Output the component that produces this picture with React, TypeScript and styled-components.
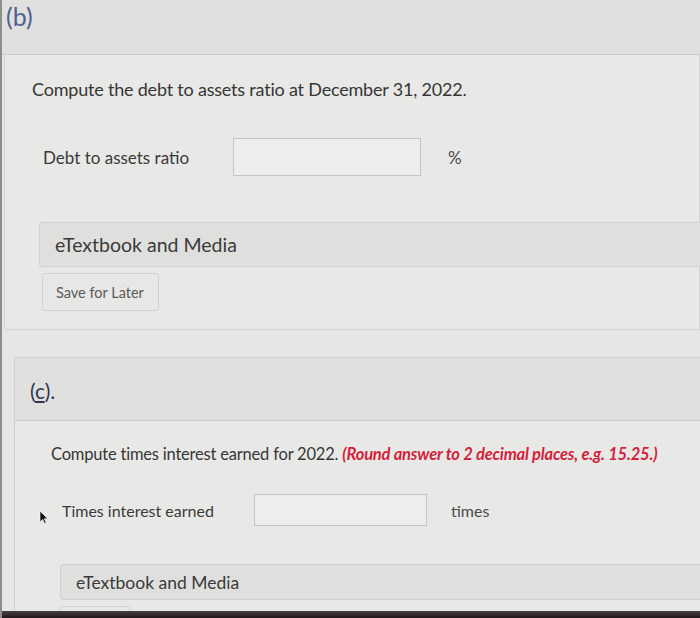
import styled, { createGlobalStyle } from 'styled-components';

const GlobalStyle = createGlobalStyle`
  html, body {
    margin: 0;
    padding: 0;
    background: #e6e7e4;
  }
  body {
    font-family: Lato, 'Open Sans', sans-serif;
    color: #383838;
  }
`;

interface AnswerProps {
  label: string;
  unit: string;
  indent: number;
  top: number;
  labelWidth: number;
  inputWidth: number;
  inputHeight: number;
  unitGap: number;
  fontSize: number;
}

function App() {
  return (
    <>
      <GlobalStyle />
      <Page>
        <PartHeader>
          <PartLetter>(b)</PartLetter>
        </PartHeader>
        <CardB>
          <Question $indent={27} $top={22} $size={18}>
            Compute the debt to assets ratio at December 31, 2022.
          </Question>
          <Answer
            label="Debt to assets ratio"
            unit="%"
            indent={38}
            top={37}
            labelWidth={190}
            inputWidth={188}
            inputHeight={38}
            unitGap={27}
            fontSize={17}
          />
          <MediaBar $indent={34} $top={46} $height={45} $size={19.5}>
            eTextbook and Media
          </MediaBar>
          <SaveButton>Save for Later</SaveButton>
        </CardB>

        <CardC>
          <SubHeader>
            <SubLetter>
              (<u>c</u>).
            </SubLetter>
          </SubHeader>
          <Question $indent={36} $top={21} $size={16.5}>
            Compute times interest earned for 2022.{' '}
            <Hint>(Round answer to 2 decimal places, e.g. 15.25.)</Hint>
          </Question>
          <CursorWrap>
            <Answer
              label="Times interest earned"
              unit="times"
              indent={47}
              top={28}
              labelWidth={192}
              inputWidth={173}
              inputHeight={32}
              unitGap={24}
              fontSize={16}
            />
            <Cursor viewBox="0 0 10 14" width="10" height="14">
              <path d="M1 1 L1 12 L3.6 9.4 L5.6 13.4 L7.2 12.6 L5.2 8.8 L8.6 8.8 Z" fill="#111" stroke="#fff" strokeWidth="0.6" />
            </Cursor>
          </CursorWrap>
          <MediaBar $indent={45} $top={38} $height={36} $size={17.5}>
            eTextbook and Media
          </MediaBar>
          <GhostButton />
        </CardC>
        <BottomEdge />
      </Page>
    </>
  );
}

function Answer({ label, unit, indent, top, labelWidth, inputWidth, inputHeight, unitGap, fontSize }: AnswerProps) {
  return (
    <AnswerRow $indent={indent} $top={top} $size={fontSize}>
      <Label $width={labelWidth}>{label}</Label>
      <Input type="text" $width={inputWidth} $height={inputHeight} />
      <Unit $gap={unitGap}>{unit}</Unit>
    </AnswerRow>
  );
}

const Page = styled.div`
  position: relative;
  height: 618px;
  overflow: hidden;
  border-left: 2px solid #8d8d8b;
  box-sizing: border-box;
  display: flex;
  flex-direction: column;
`;

const PartHeader = styled.div`
  height: 55px;
  flex-shrink: 0;
  background: #e0e1de;
  border-bottom: 1px solid #c9c9c7;
  padding: 1px 0 0 4px;
  box-sizing: border-box;
`;

const PartLetter = styled.span`
  font-size: 25px;
  color: #50608f;
`;

const CardB = styled.div`
  flex-shrink: 0;
  margin-left: 2px;
  height: 275px;
  box-sizing: border-box;
  border: 1px solid #d3d3d1;
  border-top: none;
  border-radius: 0 0 0 4px;
  background: #e8e9e6;
  display: flex;
  flex-direction: column;
`;

const Question = styled.div<{ $indent: number; $top: number; $size: number }>`
  flex-shrink: 0;
  padding: ${(p) => p.$top}px 0 0 ${(p) => p.$indent}px;
  font-size: ${(p) => p.$size}px;
  letter-spacing: -0.2px;
  line-height: 24px;
  color: #363636;
  white-space: nowrap;
`;

const Hint = styled.span`
  color: #d31f3c;
  font-weight: 700;
  font-style: italic;
`;

const AnswerRow = styled.div<{ $indent: number; $top: number; $size: number }>`
  display: flex;
  align-items: center;
  margin-top: ${(p) => p.$top}px;
  padding-left: ${(p) => p.$indent}px;
  font-size: ${(p) => p.$size}px;
  color: #3a3a3a;
`;

const Label = styled.span<{ $width: number }>`
  width: ${(p) => p.$width}px;
  flex-shrink: 0;
`;

const Input = styled.input<{ $width: number; $height: number }>`
  width: ${(p) => p.$width}px;
  height: ${(p) => p.$height}px;
  box-sizing: border-box;
  border: 1px solid #c4c4c2;
  background: #edeeeb;
  outline: none;
  margin: 0;
`;

const Unit = styled.span<{ $gap: number }>`
  margin-left: ${(p) => p.$gap}px;
  color: #4a4a4a;
`;

const MediaBar = styled.div<{ $indent: number; $top: number; $height: number; $size: number }>`
  flex-shrink: 0;
  margin: ${(p) => p.$top}px -4px 0 ${(p) => p.$indent}px;
  height: ${(p) => p.$height}px;
  box-sizing: border-box;
  border: 1px solid #d0d0ce;
  border-radius: 3px;
  background: #dfe0dd;
  display: flex;
  align-items: center;
  padding-left: 15px;
  font-size: ${(p) => p.$size}px;
  color: #3a3a3a;
`;

const SaveButton = styled.button`
  align-self: flex-start;
  flex-shrink: 0;
  margin: 6px 0 0 37px;
  width: 117px;
  height: 38px;
  box-sizing: border-box;
  border: 1px solid #d2d2d0;
  border-radius: 3px;
  background: #e7e8e5;
  font-family: Lato, sans-serif;
  font-size: 14.5px;
  color: #5a5a5a;
  text-align: left;
  padding: 0 0 0 13px;
`;

const CardC = styled.div`
  flex-shrink: 0;
  margin: 27px 0 0 12px;
  border: 1px solid #d0d0ce;
  border-right: none;
  background: #e8e9e6;
  display: flex;
  flex-direction: column;
  height: 280px;
  box-sizing: border-box;
`;

const SubHeader = styled.div`
  height: 63px;
  flex-shrink: 0;
  box-sizing: border-box;
  background: #e0e1de;
  border-bottom: 1px solid #cdcdcb;
  display: flex;
  align-items: center;
  padding: 2px 0 0 15px;
`;

const SubLetter = styled.span`
  font-size: 21px;
  color: #2f3552;
`;

const CursorWrap = styled.div`
  position: relative;
  flex-shrink: 0;
`;

const Cursor = styled.svg`
  position: absolute;
  left: 24px;
  top: 44px;
`;

const GhostButton = styled.div`
  flex-shrink: 0;
  margin: 6px 0 0 45px;
  width: 68px;
  height: 30px;
  border: 1px solid #d2d2d0;
  border-radius: 3px;
`;

const BottomEdge = styled.div`
  position: absolute;
  left: -2px;
  right: 0;
  bottom: 0;
  height: 7px;
  background: linear-gradient(#4a3f42, #221a1c);
`;

export default App;
